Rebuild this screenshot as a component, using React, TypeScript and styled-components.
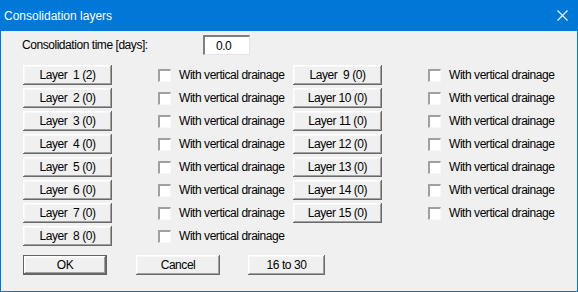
import React from "react";
import styled, { createGlobalStyle } from "styled-components";

const Global = createGlobalStyle`
  html, body { margin: 0; padding: 0; background: #ffffff; }
  body { font-family: "Liberation Sans", Arial, sans-serif; }
`;

const Window = styled.div`
  width: 578px;
  height: 292px;
  box-sizing: border-box;
  border: 1px solid #0078d7;
  border-top: none;
  background: #f0f0f0;
  display: flex;
  flex-direction: column;
  font-family: "Liberation Sans", Arial, sans-serif;
  font-size: 12px;
  letter-spacing: -0.45px;
  color: #000;
`;

const TitleBar = styled.div`
  height: 31px;
  margin: 0 -1px;
  background: #0078d7;
  display: flex;
  align-items: center;
  justify-content: space-between;
  padding: 0 10px 0 4px;
  box-sizing: border-box;
  color: #fff;
  font-family: "Liberation Sans", Arial, sans-serif;
  font-size: 12px;
  letter-spacing: 0;
`;

const CloseIcon = () => (
  <svg width="11" height="11" viewBox="0 0 11 11">
    <path d="M0.5 0.5 L10.5 10.5 M10.5 0.5 L0.5 10.5" stroke="#fff" strokeWidth="1.1" />
  </svg>
);

const Body = styled.div`
  padding: 4px 0 0 21px;
  display: flex;
  flex-direction: column;
`;

const TimeRow = styled.div`
  display: flex;
  align-items: center;
  height: 20px;
`;

const TimeLabel = styled.span`
  width: 181px;
`;

const TextInput = styled.div`
  width: 47px;
  height: 20px;
  box-sizing: border-box;
  background: #fff;
  border-top: 2px solid #808080;
  border-left: 2px solid #808080;
  border-bottom: 1px solid #e3e3e3;
  border-right: 1px solid #e3e3e3;
  padding-left: 11px;
  display: flex;
  align-items: center;
`;

const Columns = styled.div`
  margin-top: 10px;
  display: grid;
  grid-template-columns: 270px 270px;
  padding-left: 1px;
`;

const Column = styled.div`
  display: flex;
  flex-direction: column;
  gap: 3px;
`;

const Row = styled.div`
  display: flex;
  align-items: center;
  height: 20px;
`;

const Button = styled.div<{ $w: number; $default?: boolean }>`
  width: ${(p) => p.$w}px;
  height: 20px;
  box-sizing: border-box;
  background: #f0f0f0;
  display: flex;
  align-items: center;
  justify-content: center;
  white-space: pre;
  border: ${(p) => (p.$default ? "1px solid #646464" : "none")};
  box-shadow: inset -1px -1px #696969, inset 1px 1px #ffffff,
    inset -2px -2px #a0a0a0, inset 2px 2px #f8f8f8;
`;

const Check = styled.div`
  width: 13px;
  height: 13px;
  box-sizing: border-box;
  background: #fff;
  border-top: 2px solid #a0a0a0;
  border-left: 2px solid #a0a0a0;
  border-bottom: 1px solid #f8f8f8;
  border-right: 1px solid #f8f8f8;
  margin-left: 46px;
  margin-right: 8px;
`;

const Footer = styled.div`
  margin-top: 9px;
  padding-left: 1px;
  display: flex;
  align-items: center;
`;

const FooterGap = styled.div<{ $w: number }>`
  width: ${(p) => p.$w}px;
`;

const left = [
  "Layer  1 (2)",
  "Layer  2 (0)",
  "Layer  3 (0)",
  "Layer  4 (0)",
  "Layer  5 (0)",
  "Layer  6 (0)",
  "Layer  7 (0)",
  "Layer  8 (0)",
];
const right = [
  "Layer  9 (0)",
  "Layer 10 (0)",
  "Layer 11 (0)",
  "Layer 12 (0)",
  "Layer 13 (0)",
  "Layer 14 (0)",
  "Layer 15 (0)",
];

const LayerRow = ({ label }: { label: string }) => (
  <Row>
    <Button $w={89}>{label}</Button>
    <Check />
    <span>With vertical drainage</span>
  </Row>
);

export default function App() {
  return (
    <>
      <Global />
      <Window>
        <TitleBar>
          <span>Consolidation layers</span>
          <CloseIcon />
        </TitleBar>
        <Body>
          <TimeRow>
            <TimeLabel>Consolidation time [days]:</TimeLabel>
            <TextInput>0.0</TextInput>
          </TimeRow>
          <Columns>
            <Column>
              {left.map((l) => (
                <LayerRow key={l} label={l} />
              ))}
            </Column>
            <Column>
              {right.map((l) => (
                <LayerRow key={l} label={l} />
              ))}
            </Column>
          </Columns>
          <Footer>
            <Button $w={84} $default>OK</Button>
            <FooterGap $w={29} />
            <Button $w={84}>Cancel</Button>
            <FooterGap $w={28} />
            <Button $w={77}>16 to 30</Button>
          </Footer>
        </Body>
      </Window>
    </>
  );
}
